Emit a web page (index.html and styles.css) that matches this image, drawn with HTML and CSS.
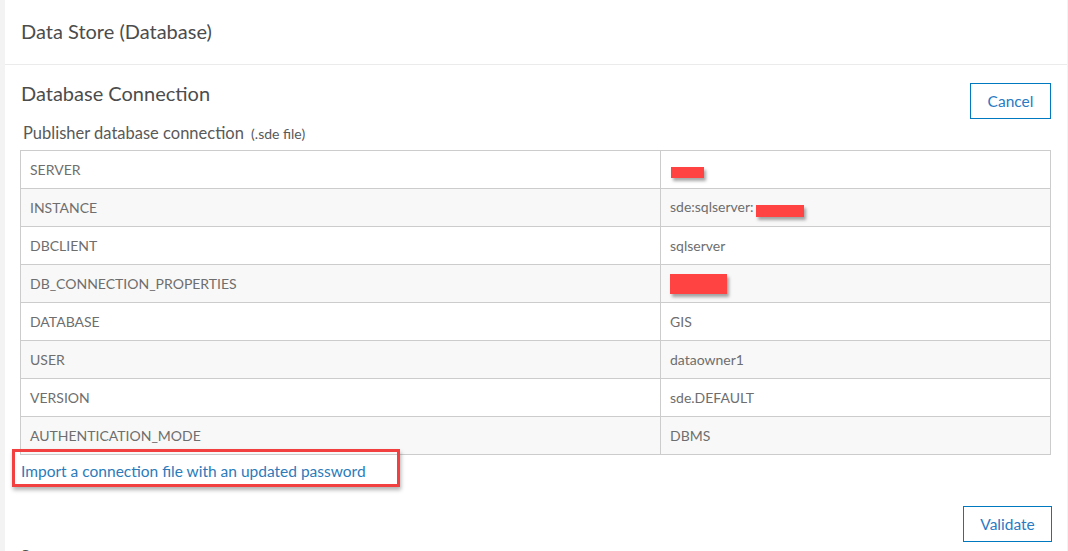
FILE: index.html
```html
<!DOCTYPE html>
<html>
<head>
<meta charset="utf-8">
<link rel="stylesheet" href="styles.css">
</head>
<body>
<div class="panel">
  <header class="panel-header">
    <h1 class="panel-title">Data Store (Database)</h1>
  </header>
  <section class="section">
    <div class="section-top">
      <div class="section-titles">
        <h2 class="section-title">Database Connection</h2>
        <div class="subtitle">Publisher database connection <span class="subtitle-note">(.sde file)</span></div>
      </div>
      <button class="btn">Cancel</button>
    </div>
    <table class="props">
      <tr><td class="key">SERVER</td><td class="val"><span class="redact redact-server"></span></td></tr>
      <tr><td class="key">INSTANCE</td><td class="val">sde:sqlserver:<span class="redact redact-instance"></span></td></tr>
      <tr><td class="key">DBCLIENT</td><td class="val">sqlserver</td></tr>
      <tr><td class="key">DB_CONNECTION_PROPERTIES</td><td class="val"><span class="redact redact-props"></span></td></tr>
      <tr><td class="key">DATABASE</td><td class="val">GIS</td></tr>
      <tr><td class="key">USER</td><td class="val">dataowner1</td></tr>
      <tr><td class="key">VERSION</td><td class="val">sde.DEFAULT</td></tr>
      <tr><td class="key">AUTHENTICATION_MODE</td><td class="val">DBMS</td></tr>
    </table>
    <div class="link-row">
      <a class="link" href="#">Import a connection file with an updated password</a>
      <span class="highlight"></span>
    </div>
    <div class="actions">
      <button class="btn">Validate</button>
    </div>
    <h2 class="section-title next">Sources</h2>
  </section>
</div>
</body>
</html>
```
FILE: styles.css
```css
html, body {
  margin: 0;
  padding: 0;
  height: 100%;
  overflow: hidden;
}
body {
  background: #f3f3f3;
  font-family: Lato, "Open Sans", sans-serif;
  color: #595959;
}
.panel {
  margin-left: 5px;
  width: 1062px;
  min-height: 100%;
  background: #fff;
}
.panel-header {
  height: 64px;
  border-bottom: 1px solid #ebebeb;
  display: flex;
  align-items: center;
  padding-left: 16px;
}
.panel-title {
  margin: 0;
  font-size: 20px;
  font-weight: 400;
  color: #4c4c4c;
  line-height: 24px;
  padding-bottom: 2px;
}
.section {
  padding: 0 15px;
}
.section-top {
  display: flex;
  justify-content: space-between;
  align-items: flex-start;
  padding-top: 16px;
}
.section-titles {
  padding-left: 1px;
}
.section-title {
  margin: 0;
  font-size: 20px;
  font-weight: 400;
  color: #4c4c4c;
  line-height: 24px;
}
.subtitle {
  margin-top: 18px;
  font-size: 16.5px;
  line-height: 20px;
  color: #595959;
  padding-left: 2px;
}
.subtitle-note {
  font-size: 14px;
  margin-left: 3px;
}
.btn {
  font-family: Lato, "Open Sans", sans-serif;
  font-size: 15.5px;
  color: #2a7ac4;
  background: #fff;
  border: 1px solid #0079c1;
  padding: 0 14px;
  height: 36px;
  margin: 0;
}
.section-top .btn {
  width: 81px;
  margin-top: 2px;
  margin-right: 1px;
}
.props {
  margin-top: 6px;
  width: 1031px;
  border-collapse: collapse;
  font-size: 14px;
  color: #6e6e6e;
}
.props td {
  border: 1px solid #cccccc;
  height: 38px;
  padding: 0 0 0 9px;
  vertical-align: middle;
  box-sizing: border-box;
}
.props tr:nth-child(even) td {
  background: #f8f8f8;
}
.props .key {
  width: 640px;
}
.redact {
  display: inline-block;
  background: #ff4343;
  vertical-align: middle;
  box-shadow: 2px 3px 3px rgba(0, 0, 0, 0.35);
}
.redact-server {
  width: 33px;
  height: 11px;
  margin-left: 1px;
  margin-top: 2px;
}
.redact-instance {
  width: 48px;
  height: 12px;
  margin-left: 2px;
  margin-top: 4px;
}
.redact-props {
  width: 57px;
  height: 20px;
}
.link-row {
  position: relative;
  padding: 6px 0 0 1px;
  height: 31px;
}
.link {
  font-size: 15.5px;
  color: #2b7bba;
  text-decoration: none;
  line-height: 20px;
}
.highlight {
  position: absolute;
  left: -8px;
  top: -6px;
  width: 382px;
  height: 32px;
  border: 3px solid #f24040;
  box-shadow: 1px 3px 4px rgba(0, 0, 0, 0.3);
  pointer-events: none;
}
.actions {
  display: flex;
  justify-content: flex-end;
  padding-top: 14px;
}
.actions .btn {
  width: 89px;
  height: 36px;
}
.section-title.next {
  margin-top: 2px;
}
```
